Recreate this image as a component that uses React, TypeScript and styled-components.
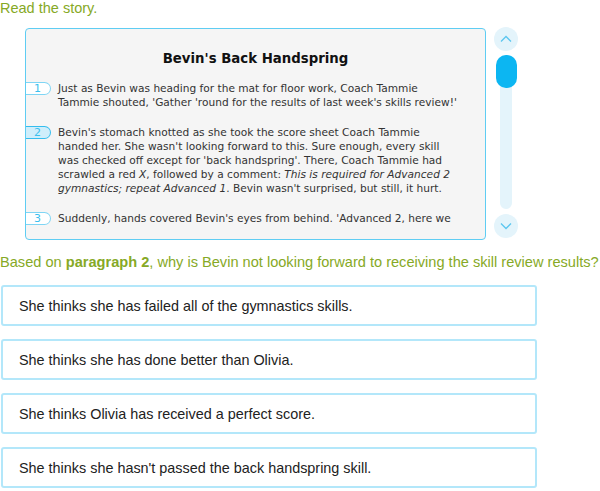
import React from "react";
import styled, { createGlobalStyle } from "styled-components";

const colors = {
    green: "#86a926",
    text: "#333333",
    blueBorder: "#5fcdf3",
    lightBorder: "#b3e7fa",
    tabBlue: "#3cc0ee",
    tabFill: "#cfeefb",
    track: "#e4f4fb",
    thumb: "#0cb6f2",
    paper: "#f5f5f5",
};

const GlobalStyle = createGlobalStyle`
    body {
        margin: 0;
        background: white;
        font-family: "Liberation Sans", Arial, sans-serif;
    }
`;

const Page = styled.div`
    width: 600px;
    height: 491px;
    overflow: hidden;
    display: flex;
    flex-direction: column;
`;

const Prompt = styled.div`
    color: ${colors.green};
    font-size: 14.5px;
    line-height: 16px;
    white-space: nowrap;
`;

const ReaderRow = styled.div`
    display: flex;
    align-items: flex-start;
    gap: 8px;
    margin: 12px 0 0 25px;
`;

const PassageBox = styled.div`
    width: 461px;
    height: 212px;
    box-sizing: border-box;
    border: 1px solid ${colors.blueBorder};
    border-radius: 4px;
    background: ${colors.paper};
    overflow: hidden;
    font-family: "DejaVu Sans", Verdana, sans-serif;
    color: ${colors.text};
`;

const Title = styled.h1`
    margin: 21px 0 14px;
    text-align: center;
    font-size: 13.3px;
    line-height: 17px;
    color: #111;
`;

const Paragraph = styled.div`
    display: flex;
    align-items: flex-start;
    gap: 7px;
    margin: 0 0 16px -1px;
`;

const Tab = styled.div<{ active?: boolean }>`
    flex: none;
    width: 26px;
    height: 13px;
    margin-top: 1px;
    box-sizing: border-box;
    border: 1px solid ${(p) => (p.active ? "#35bdee" : "#7fd5f4")};
    border-left: none;
    border-radius: 0 7px 7px 0;
    background: ${(p) => (p.active ? colors.tabFill : "white")};
    color: ${colors.tabBlue};
    font-size: 11px;
    line-height: 11px;
    text-align: center;
`;

const Lines = styled.div`
    font-size: 10.6px;
    line-height: 14px;
    white-space: nowrap;
`;

const Scroller = styled.div`
    display: flex;
    flex-direction: column;
    align-items: center;
    width: 24px;
    margin-top: -1px;
`;

const RoundButton = styled.div`
    width: 24px;
    height: 24px;
    border-radius: 50%;
    background: ${colors.track};
    display: flex;
    align-items: center;
    justify-content: center;
`;

const Track = styled.div`
    position: relative;
    width: 12px;
    height: 154px;
    margin: 4px 0 5px;
    border-radius: 6px;
    background: ${colors.track};
`;

const Thumb = styled.div`
    position: absolute;
    top: 0;
    left: -4.5px;
    width: 21px;
    height: 33px;
    border-radius: 10px;
    background: ${colors.thumb};
`;

const Question = styled.div`
    margin-top: 14px;
    color: ${colors.green};
    font-size: 14.6px;
    line-height: 16px;
    white-space: nowrap;
    b {
        font-weight: bold;
    }
`;

const Choices = styled.div`
    display: flex;
    flex-direction: column;
    gap: 13px;
    margin: 15px 0 0 1px;
`;

const Choice = styled.div`
    width: 536px;
    height: 41px;
    box-sizing: border-box;
    border: 2px solid ${colors.lightBorder};
    border-radius: 3px;
    padding-left: 16px;
    display: flex;
    align-items: center;
    color: #222;
    font-size: 14.4px;
`;

const Chevron = ({ up }: { up?: boolean }) => (
    <svg width="12" height="8" viewBox="0 0 12 8">
        <path
            d={up ? "M1 6.5 L6 1.5 L11 6.5" : "M1 1.5 L6 6.5 L11 1.5"}
            fill="none"
            stroke="#5cc6ef"
            strokeWidth="1.3"
        />
    </svg>
);

const answers = [
    "She thinks she has failed all of the gymnastics skills.",
    "She thinks she has done better than Olivia.",
    "She thinks Olivia has received a perfect score.",
    "She thinks she hasn't passed the back handspring skill.",
];

export default function App() {
    return (
        <Page>
            <GlobalStyle />
            <Prompt>Read the story.</Prompt>
            <ReaderRow>
                <PassageBox>
                    <Title>Bevin's Back Handspring</Title>
                    <Paragraph>
                        <Tab>1</Tab>
                        <Lines>
                            Just as Bevin was heading for the mat for floor work, Coach Tammie
                            <br />
                            Tammie shouted, 'Gather 'round for the results of last week's skills review!'
                        </Lines>
                    </Paragraph>
                    <Paragraph>
                        <Tab active>2</Tab>
                        <Lines>
                            Bevin's stomach knotted as she took the score sheet Coach Tammie
                            <br />
                            handed her. She wasn't looking forward to this. Sure enough, every skill
                            <br />
                            was checked off except for 'back handspring'. There, Coach Tammie had
                            <br />
                            scrawled a red <i>X</i>, followed by a comment: <i>This is required for Advanced 2</i>
                            <br />
                            <i>gymnastics; repeat Advanced 1</i>. Bevin wasn't surprised, but still, it hurt.
                        </Lines>
                    </Paragraph>
                    <Paragraph>
                        <Tab>3</Tab>
                        <Lines>
                            Suddenly, hands covered Bevin's eyes from behind. 'Advanced 2, here we
                        </Lines>
                    </Paragraph>
                </PassageBox>
                <Scroller>
                    <RoundButton>
                        <Chevron up />
                    </RoundButton>
                    <Track>
                        <Thumb />
                    </Track>
                    <RoundButton>
                        <Chevron />
                    </RoundButton>
                </Scroller>
            </ReaderRow>
            <Question>
                Based on <b>paragraph 2</b>, why is Bevin not looking forward to receiving the skill review results?
            </Question>
            <Choices>
                {answers.map((a) => (
                    <Choice key={a}>{a}</Choice>
                ))}
            </Choices>
        </Page>
    );
}
